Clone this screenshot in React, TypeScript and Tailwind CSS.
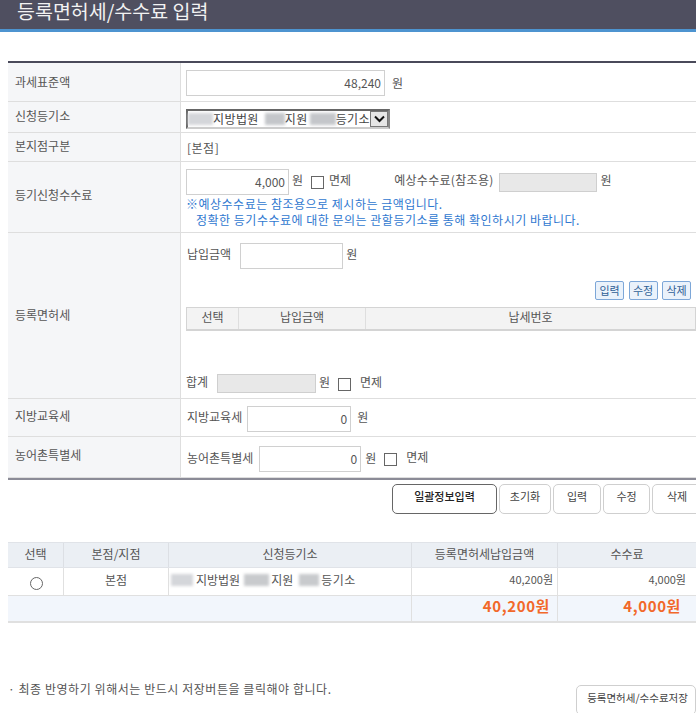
const FONT = "font-['Noto_Sans_CJK_KR','Noto_Sans',sans-serif]";

function Blur({ w, tone = "bg-[#d4d6da]" }: { w: number; tone?: string }) {
  return <span className={`inline-block h-[12px] shrink-0 blur-[1.5px] ${tone}`} style={{ width: w }} />;
}

function TextInput({ w, value, className = "" }: { w: number; value?: string; className?: string }) {
  return (
    <div className={`h-[26px] shrink-0 border border-[#d0d0d0] bg-white pr-[3px] text-right leading-[24px] text-[#555] ${className}`} style={{ width: w }}>
      {value}
    </div>
  );
}

function Disabled({ w, className = "" }: { w: number; className?: string }) {
  return <div className={`h-[19px] shrink-0 border border-[#cfcfcf] bg-[#e8e8e8] ${className}`} style={{ width: w }} />;
}

function Check({ className = "" }: { className?: string }) {
  return <span className={`block h-[13px] w-[13px] shrink-0 border border-[#666] bg-white ${className}`} />;
}

function FormRow({ label, height, children, labelClass = "" }: { label: string; height: number; children: React.ReactNode; labelClass?: string }) {
  return (
    <div className="flex border-b border-[#dedede]" style={{ height }}>
      <div className={`flex w-[173px] shrink-0 items-center border-r border-[#dedede] bg-[#f5f6f8] pl-[7px] text-[#555] ${labelClass}`}>{label}</div>
      <div className="min-w-0 flex-1 pl-[5px]">{children}</div>
    </div>
  );
}

function MiniButton({ label }: { label: string }) {
  return (
    <span className="flex h-[19px] w-[29px] items-center justify-center rounded-[2px] border border-[#7da7d8] bg-[#eaf2fb] text-[11px] text-[#2f5f96]">
      {label}
    </span>
  );
}

function ActionButton({ label, width, dark }: { label: string; width: number; dark?: boolean }) {
  return (
    <span
      className={`flex h-[30px] shrink-0 items-center justify-center rounded-[5px] border bg-white pb-[5px] text-[11px] ${dark ? "border-[#666] font-medium text-[#222]" : "border-[#cfcfcf] text-[#444]"}`}
      style={{ width }}
    >
      {label}
    </span>
  );
}

const summaryColumns = "grid grid-cols-[56px_105px_243px_146px_138px]";

export default function App() {
  return (
    <div className={`h-[713px] w-[696px] overflow-hidden bg-white text-[12px] leading-none text-[#555] ${FONT}`}>
      <div className="h-[29px] bg-[#4f4f60] pl-[17px] pt-[1px] text-[19.5px] leading-[20px] text-[#f2f2f2]">등록면허세/수수료 입력</div>
      <div className="h-[3px] bg-[#4d94d0]" />

      <div className="ml-[8px] mt-[29px] border-t-2 border-[#4a4a5a]">
        <FormRow label="과세표준액" height={39} labelClass="pb-[1px]">
          <div className="flex items-center gap-[7px] pt-[7px]">
            <TextInput w={199} value="48,240" />
            <span>원</span>
          </div>
        </FormRow>
        <FormRow label="신청등기소" height={31} labelClass="pb-[3px]">
          <div className="pt-[7px]">
            <div className="flex h-[20px] w-[204px] items-center border-2 border-t-[#666] border-r-[#888] border-b-[#ccc] border-l-[#666] tracking-[0.4px] text-[#444]">
              <Blur w={25} />
              <span>지방법원</span>
              <Blur w={20} tone="bg-[#c4c6ca] ml-[6px]" />
              <span>지원</span>
              <Blur w={26} tone="bg-[#c4c6ca] ml-[2px]" />
              <span className="whitespace-nowrap">등기소</span>
              <span className="ml-auto flex h-[16px] w-[18px] shrink-0 items-center justify-center border border-[#777] bg-[#e6e6e6]">
                <svg width="11" height="8" viewBox="0 0 11 8"><path d="M1 1.5 5.5 6 10 1.5" fill="none" stroke="#111" strokeWidth="2" /></svg>
              </span>
            </div>
          </div>
        </FormRow>
        <FormRow label="본지점구분" height={29} labelClass="pb-[2px]">
          <div className="pl-[1px] pt-[9px] tracking-[0.5px]">[본점]</div>
        </FormRow>
        <FormRow label="등기신청수수료" height={71} labelClass="pb-[4px]">
          <div className="flex items-start pt-[7px]">
            <TextInput w={103} value="4,000" />
            <span className="ml-[3px] pt-[5px]">원</span>
            <Check className="ml-[8px] mt-[7px]" />
            <span className="ml-[5px] pt-[5px]">면제</span>
            <span className="ml-[43px] pt-[5px] tracking-[0.3px]">예상수수료(참조용)</span>
            <Disabled w={98} className="ml-[5px] mt-[4px]" />
            <span className="ml-[4px] pt-[5px]">원</span>
          </div>
          <div className="whitespace-nowrap pt-[1px] leading-[16px] tracking-[0.5px] text-[#2f78d0]">
            <div>※예상수수료는 참조용으로 제시하는 금액입니다.</div>
            <div className="pl-[10px]">정확한 등기수수료에 대한 문의는 관할등기소를 통해 확인하시기 바랍니다.</div>
          </div>
        </FormRow>
        <FormRow label="등록면허세" height={166} labelClass="pb-[2px]">
          <div className="flex items-center pt-[10px]">
            <span className="pb-[4px] pl-[1px]">납입금액</span>
            <TextInput w={103} className="ml-[9px]" />
            <span className="ml-[3px] pb-[4px]">원</span>
          </div>
          <div className="mt-[12px] flex justify-end gap-[4.5px] pr-[5px]">
            <MiniButton label="입력" />
            <MiniButton label="수정" />
            <MiniButton label="삭제" />
          </div>
          <div className="mt-[7px] grid h-[24px] grid-cols-[52px_127px_1fr] border border-b-2 border-[#d4d4d4] bg-[#f3f3f3] text-center leading-[18px]">
            <div className="border-r border-[#dedede]">선택</div>
            <div className="border-r border-[#dedede]">납입금액</div>
            <div>납세번호</div>
          </div>
          <div className="mt-[43px] flex items-center">
            <span className="w-[31px] shrink-0 pb-[3px]">합계</span>
            <Disabled w={99} />
            <span className="ml-[3px] pb-[3px]">원</span>
            <Check className="ml-[8px] mt-[2px]" />
            <span className="ml-[9px] pb-[3px]">면제</span>
          </div>
        </FormRow>
        <FormRow label="지방교육세" height={38} labelClass="pb-[4px]">
          <div className="flex items-center pt-[7px]">
            <span className="pb-[5px] pl-[1px]">지방교육세</span>
            <TextInput w={104} value="0" className="ml-[5px]" />
            <span className="ml-[6px] pb-[5px]">원</span>
          </div>
        </FormRow>
        <FormRow label="농어촌특별세" height={41} labelClass="pb-[4px]">
          <div className="flex items-center pt-[9px]">
            <span className="pb-[2px] pl-[1px]">농어촌특별세</span>
            <TextInput w={102} value="0" className="ml-[6px]" />
            <span className="ml-[4px] pb-[3px]">원</span>
            <Check className="ml-[8px]" />
            <span className="ml-[9px] pb-[4px]">면제</span>
          </div>
        </FormRow>
      </div>
      <div className="ml-[8px] h-[2px] bg-[#8b8b97]" />

      <div className="ml-[392px] mt-[4px] flex gap-[2px]">
        <ActionButton label="일괄정보입력" width={105} dark />
        <ActionButton label="초기화" width={52} />
        <ActionButton label="입력" width={48} />
        <ActionButton label="수정" width={47} />
        <ActionButton label="삭제" width={50} />
      </div>

      <div className="ml-[8px] mt-[28px] border-b-2 border-[#e0e0e0]">
        <div className={`${summaryColumns} h-[26px] border-y border-[#e0e3e8] bg-[#ebeff4] text-center leading-[21px]`}>
          <div className="border-r border-[#dcdfe4]">선택</div>
          <div className="border-r border-[#dcdfe4]">본점/지점</div>
          <div className="border-r border-[#dcdfe4]">신청등기소</div>
          <div className="border-r border-[#dcdfe4]">등록면허세납입금액</div>
          <div>수수료</div>
        </div>
        <div className={`${summaryColumns} h-[28px] border-b border-[#e0e0e0] leading-[23px]`}>
          <div className="flex items-center justify-center border-r border-[#e0e0e0]">
            <span className="ml-[1px] mt-[2px] block h-[13px] w-[13px] rounded-full border border-[#666]" />
          </div>
          <div className="border-r border-[#e0e0e0] text-center">본점</div>
          <div className="flex items-center whitespace-nowrap border-r border-[#e0e0e0] pb-[5px] pl-[2px]">
            <Blur w={22} />
            <span className="ml-[3px]">지방법원</span>
            <Blur w={25} tone="bg-[#c8cacd] ml-[4px]" />
            <span className="ml-[2px]">지원</span>
            <Blur w={20} tone="bg-[#c8cacd] ml-[6px]" />
            <span className="ml-[2px] tracking-[0.4px]">등기소</span>
          </div>
          <div className="border-r border-[#e0e0e0] pr-[4px] text-right text-[11px]">40,200원</div>
          <div className="pr-[10px] text-right text-[11px]">4,000원</div>
        </div>
        <div className={`${summaryColumns} h-[25px] bg-[#f2f6fc] text-[15px] font-bold leading-[19px] tracking-[0.6px] text-[#f2682a]`}>
          <div className="col-span-3 border-r border-[#e0e0e0]" />
          <div className="border-r border-[#e0e0e0] pr-[7px] text-right">40,200원</div>
          <div className="pr-[15px] text-right">4,000원</div>
        </div>
      </div>

      <div className="mt-[60px] flex items-start">
        <div className="ml-[8px] whitespace-nowrap tracking-[0.55px]">· 최종 반영하기 위해서는 반드시 저장버튼을 클릭해야 합니다.</div>
        <div className="ml-auto mt-[2px] flex h-[30px] w-[120px] items-center justify-center rounded-[5px] border border-[#cfcfcf] pb-[4px] pl-[3px] text-[10.5px] text-[#444]">
          등록면허세/수수료저장
        </div>
      </div>
    </div>
  );
}
